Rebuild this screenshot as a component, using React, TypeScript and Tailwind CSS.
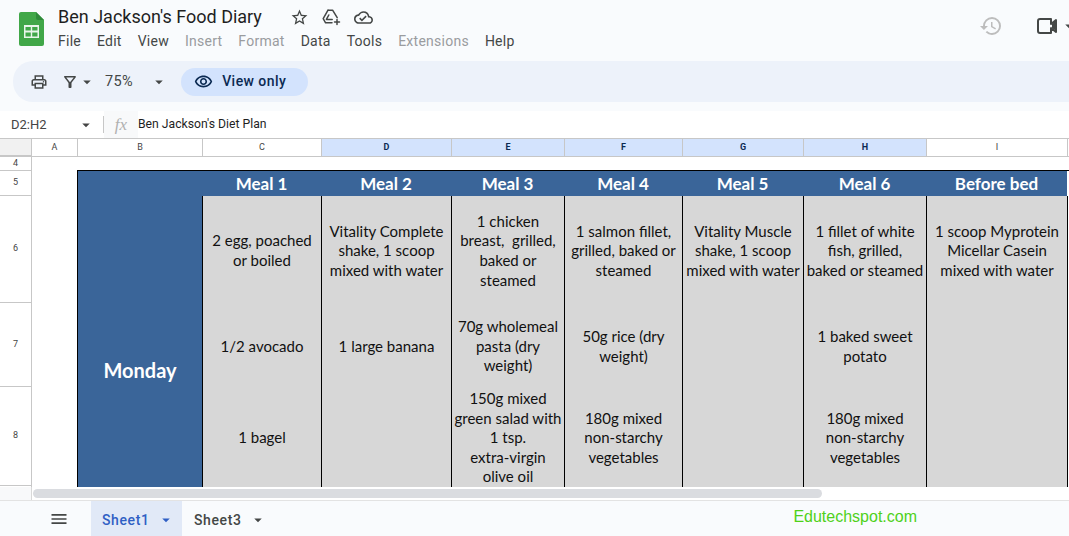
import { MdOutlineStarBorder, MdOutlineCloudDone, MdOutlinePrint, MdOutlineFilterAlt, MdOutlineRemoveRedEye, MdHistory, MdMenu, MdArrowDropDown } from "react-icons/md";

const menu: [string, boolean][] = [["File", false], ["Edit", false], ["View", false], ["Insert", true], ["Format", true], ["Data", false], ["Tools", false], ["Extensions", true], ["Help", false]];
const cols: [string, boolean][] = [["A", false], ["B", false], ["C", false], ["D", true], ["E", true], ["F", true], ["G", true], ["H", true], ["I", false]];
const meals = ["Meal 1", "Meal 2", "Meal 3", "Meal 4", "Meal 5", "Meal 6", "Before bed"];
const rows: string[][] = [
  ["2 egg, poached\nor boiled", "Vitality Complete\nshake, 1 scoop\nmixed with water", "1 chicken\nbreast,  grilled,\nbaked or\nsteamed", "1 salmon fillet,\ngrilled, baked or\nsteamed", "Vitality Muscle\nshake, 1 scoop\nmixed with water", "1 fillet of white\nfish, grilled,\nbaked or steamed", "1 scoop Myprotein\nMicellar Casein\nmixed with water"],
  ["1/2 avocado", "1 large banana", "70g wholemeal\npasta (dry\nweight)", "50g rice (dry\nweight)", "", "1 baked sweet\npotato", ""],
  ["1 bagel", "", "150g mixed\ngreen salad with\n1 tsp.\nextra-virgin\nolive oil", "180g mixed\nnon-starchy\nvegetables", "", "180g mixed\nnon-starchy\nvegetables", ""],
  ["", "", "", "", "", "", ""],
];
const rowNums = ["6", "7", "8", ""];

function RowHead({ n }: { n: string }) {
  return <div className="flex items-center justify-center border-r border-b border-[#c7c7c7] bg-white text-[9px] text-[#444] font-['Roboto',sans-serif]">{n}</div>;
}

export default function App() {
  return (
    <div className="flex h-[536px] w-[1069px] flex-col overflow-hidden bg-[#f9fbfd] font-['Roboto',sans-serif] text-[#202124]">
      {/* Title area */}
      <div className="flex h-[61px] shrink-0">
        <svg width="25" height="34" viewBox="0 0 25 34" className="ml-[19px] mt-[12px] shrink-0">
          <path d="M2 0H17L25 8V32a2 2 0 0 1-2 2H2a2 2 0 0 1-2-2V2a2 2 0 0 1 2-2Z" fill="#41a748" />
          <path d="M17 0L25 8H19a2 2 0 0 1-2-2Z" fill="#2f8a3a" />
          <path d="M5 13H20V26H5Z M6.5 15V18.5H11.8V15Z M13.2 15V18.5H18.5V15Z M6.5 20.5V24.5H11.8V20.5Z M13.2 20.5V24.5H18.5V20.5Z" fill="#e9f5ea" fillRule="evenodd" />
        </svg>
        <div className="ml-[14px] flex flex-col">
          <div className="flex h-[34px] items-center">
            <span className="w-[206px] text-[18px] leading-none text-[#1f1f1f]">Ben Jackson's Food Diary</span>
            <div className="ml-[26px] flex items-center text-[#444746]">
              <MdOutlineStarBorder size={19} />
              <svg width="19" height="17" viewBox="0 0 19 17" fill="none" stroke="#444746" strokeWidth="1.5" strokeLinejoin="round" strokeLinecap="round" className="ml-[13px] shrink-0">
                <path d="M6 1.2H10.6L15.2 8.6" />
                <path d="M6 1.2L1.2 9.6L3.6 13.8H10" />
                <path d="M6.8 6L4.4 10.4H10.2" />
                <path d="M15 10.5V15.5M12.5 13H17.5" />
              </svg>
              <MdOutlineCloudDone size={19} className="ml-[13px]" />
            </div>
          </div>
          <div className="flex h-[14px] items-center gap-[16px] text-[14px] tracking-[0.25px]">
            {menu.map(([m, off]) => (
              <span key={m} className={off ? "text-[#9a9c9f]" : "text-[#444746]"}>{m}</span>
            ))}
          </div>
        </div>
        <div className="ml-auto mr-[-9px] mt-[15px] flex h-[22px] items-center">
          <MdHistory size={24} className="text-[#bdbdbd]" />
          <svg width="20" height="16" viewBox="0 0 20 16" fill="none" className="ml-[34px] shrink-0">
            <path d="M3 1H14V6L19 2V14L14 10V15H3a2 2 0 0 1-2-2V3a2 2 0 0 1 2-2Z" stroke="#444746" strokeWidth="2" strokeLinejoin="round" fill="none" />
            <path d="M15 6L19 3V13L15 10Z" fill="#444746" />
          </svg>
          <MdArrowDropDown size={18} className="ml-[3px] shrink-0 text-[#444746]" />
        </div>
      </div>

      {/* Toolbar */}
      <div className="ml-[13px] flex h-[41px] shrink-0 items-center rounded-l-[20px] bg-[#edf2fa] pl-[17px] text-[#444746]">
        <MdOutlinePrint size={18} />
        <MdOutlineFilterAlt size={18} className="ml-[13px]" />
        <MdArrowDropDown size={18} className="-ml-px" />
        <span className="ml-[9px] text-[14.5px] tracking-[0.4px]">75%</span>
        <MdArrowDropDown size={18} className="ml-[17px]" />
        <div className="ml-[13px] flex h-[28px] w-[127px] items-center rounded-[14px] bg-[#d3e3fd] pl-[13px] text-[14px] font-medium tracking-[0.45px] text-[#0b2a52]">
          <MdOutlineRemoveRedEye size={19} />
          <span className="ml-[9px]">View only</span>
        </div>
      </div>

      <div className="h-[9px] shrink-0" />

      {/* Formula bar */}
      <div className="flex h-[27px] shrink-0 items-center bg-white">
        <span className="ml-[11px] w-[66px] text-[13px] text-[#444]">D2:H2</span>
        <MdArrowDropDown size={18} className="text-[#444]" />
        <div className="ml-[8px] h-[17px] w-px bg-[#c7c7c7]" />
        <span className="flex h-[27px] w-[34px] items-center justify-center bg-[#f8f9fa] font-['Liberation_Serif',serif] text-[17px] italic text-[#b0b0b0]">fx</span>
        <span className="text-[12.2px] text-[#1f1f1f]">Ben Jackson's Diet Plan</span>
      </div>

      {/* Sheet */}
      <div className="grid h-[349px] shrink-0 grid-cols-[32px_45px_125px_119px_130px_113px_118px_121px_123px_141px_2px] grid-rows-[18px_14px_25px_107px_84px_99px_82px] overflow-hidden border-t border-[#c7c7c7] bg-white font-['Lato',sans-serif]">
        <div className="border-r border-b-2 border-[#c7c7c7] bg-[#f1f1f1]" />
        {cols.map(([c, sel], i) => (
          <div key={c} className={`flex items-center justify-center border-b border-[#c7c7c7] font-['Roboto',sans-serif] text-[9px] ${i > 0 ? "border-l" : ""} ${sel ? "bg-[#d3e3fd] font-bold text-[#0b2a52]" : "bg-white text-[#444]"}`}>{c}</div>
        ))}
        <div className="border-b border-l border-[#c7c7c7]" />

        <RowHead n="4" />
        <div />
        <div className="col-span-9 border-b border-black" />

        <RowHead n="5" />
        <div />
        <div className="row-span-5 flex items-center justify-center border-l border-black bg-[#3a6599] text-[20px] font-bold text-white">Monday</div>
        {meals.map((m) => (
          <div key={m} className="flex items-center justify-center bg-[#3a6599] text-[17px] font-bold text-white">{m}</div>
        ))}
        <div />

        {rows.map((r, i) => (
          <div key={i} className="contents">
            <RowHead n={rowNums[i]} />
            <div />
            {r.map((t, j) => (
              <div key={j} className="flex items-center justify-center whitespace-pre border-l border-black bg-[#d7d7d7] pt-[3px] text-center text-[15px] leading-[19.6px] text-[#111]">{t}</div>
            ))}
            <div className="border-l border-black" />
          </div>
        ))}
      </div>

      {/* Scroll bar */}
      <div className="flex h-[14px] shrink-0 border-b border-[#e3e3e3] bg-white">
        <div className="w-[32px] border-r border-[#d8d8d8] bg-[#f8f9fa]" />
        <div className="ml-px mt-[2px] h-[9px] w-[789px] rounded-[5px] bg-[#dadce0]" />
      </div>

      {/* Tabs */}
      <div className="flex min-h-0 flex-1 items-stretch">
        <MdMenu size={20} className="ml-[49px] mt-[8px] text-[#444746]" />
        <div className="ml-[22px] flex w-[91px] items-center bg-[#e1e9f7] pl-[11px] pt-[3px] text-[14px] font-medium tracking-[0.6px] text-[#2f5fc4]">
          Sheet1
          <MdArrowDropDown size={18} className="ml-[8px]" />
        </div>
        <div className="ml-[12px] flex items-center pt-[3px] text-[14px] font-medium tracking-[0.6px] text-[#444746]">
          Sheet3
          <MdArrowDropDown size={18} className="ml-[8px]" />
        </div>
        <span className="ml-auto mr-[152px] mt-[6px] font-['Liberation_Sans',sans-serif] text-[16px] leading-[20px] text-[#4fd11a]">Edutechspot.com</span>
      </div>
    </div>
  );
}
